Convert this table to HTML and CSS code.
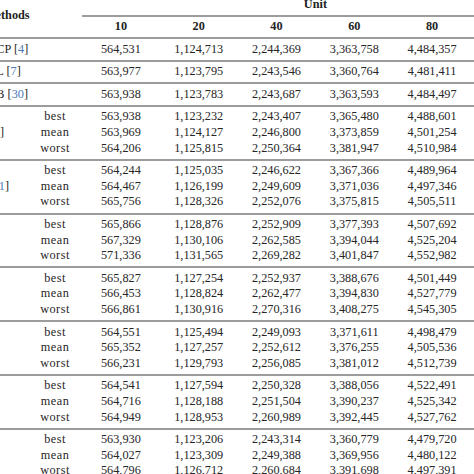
FILE: index.html
```html
<!DOCTYPE html>
<html lang="en">
<head>
<meta charset="utf-8">
<title>Unit commitment results</title>
<link rel="stylesheet" href="styles.css">
</head>
<body>
<div class="frame">
<table class="results">
  <colgroup>
    <col class="c-method">
    <col class="c-label">
    <col class="c-num"><col class="c-num"><col class="c-num"><col class="c-num"><col class="c-num"><col class="c-num">
  </colgroup>
  <thead>
    <tr>
      <th class="methods" rowspan="2">Methods</th>
      <th class="blank" rowspan="2"></th>
      <th class="unit" colspan="6">Unit</th>
    </tr>
    <tr>
      <th>10</th><th>20</th><th>40</th><th>60</th><th>80</th><th class="hidden-col">100</th>
    </tr>
  </thead>
  <tbody>
    <tr>
      <td class="method">MILP-CP [<span class="ref">4</span>]</td><td class="label"></td>
      <td>564,531</td><td>1,124,713</td><td>2,244,369</td><td>3,363,758</td><td>4,484,357</td><td></td>
    </tr>
    <tr>
      <td class="method">MILP-L [<span class="ref">7</span>]</td><td class="label"></td>
      <td>563,977</td><td>1,123,795</td><td>2,243,546</td><td>3,360,764</td><td>4,481,411</td><td></td>
    </tr>
    <tr>
      <td class="method">MILP-B [<span class="ref">30</span>]</td><td class="label"></td>
      <td>563,938</td><td>1,123,783</td><td>2,243,687</td><td>3,363,593</td><td>4,484,497</td><td></td>
    </tr>
    <tr class="group">
      <td class="method">CSO [<span class="ref">9</span>]</td>
      <td class="label"><span>best</span><span>mean</span><span>worst</span></td>
      <td><span>563,938</span><span>563,969</span><span>564,206</span></td>
      <td><span>1,123,232</span><span>1,124,127</span><span>1,125,815</span></td>
      <td><span>2,243,407</span><span>2,246,800</span><span>2,250,364</span></td>
      <td><span>3,365,480</span><span>3,373,859</span><span>3,381,947</span></td>
      <td><span>4,488,601</span><span>4,501,254</span><span>4,510,984</span></td>
      <td></td>
    </tr>
    <tr class="group">
      <td class="method">PSO [<span class="ref">21</span>]</td>
      <td class="label"><span>best</span><span>mean</span><span>worst</span></td>
      <td><span>564,244</span><span>564,467</span><span>565,756</span></td>
      <td><span>1,125,035</span><span>1,126,199</span><span>1,128,326</span></td>
      <td><span>2,246,622</span><span>2,249,609</span><span>2,252,076</span></td>
      <td><span>3,367,366</span><span>3,371,036</span><span>3,375,815</span></td>
      <td><span>4,489,964</span><span>4,497,346</span><span>4,505,511</span></td>
      <td></td>
    </tr>
    <tr class="group">
      <td class="method">GA [<span class="ref">5</span>]</td>
      <td class="label"><span>best</span><span>mean</span><span>worst</span></td>
      <td><span>565,866</span><span>567,329</span><span>571,336</span></td>
      <td><span>1,128,876</span><span>1,130,106</span><span>1,131,565</span></td>
      <td><span>2,252,909</span><span>2,262,585</span><span>2,269,282</span></td>
      <td><span>3,377,393</span><span>3,394,044</span><span>3,401,847</span></td>
      <td><span>4,507,692</span><span>4,525,204</span><span>4,552,982</span></td>
      <td></td>
    </tr>
    <tr class="group">
      <td class="method">SA [<span class="ref">8</span>]</td>
      <td class="label"><span>best</span><span>mean</span><span>worst</span></td>
      <td><span>565,827</span><span>566,453</span><span>566,861</span></td>
      <td><span>1,127,254</span><span>1,128,824</span><span>1,130,916</span></td>
      <td><span>2,252,937</span><span>2,262,477</span><span>2,270,316</span></td>
      <td><span>3,388,676</span><span>3,394,830</span><span>3,408,275</span></td>
      <td><span>4,501,449</span><span>4,527,779</span><span>4,545,305</span></td>
      <td></td>
    </tr>
    <tr class="group">
      <td class="method">TS [<span class="ref">2</span>]</td>
      <td class="label"><span>best</span><span>mean</span><span>worst</span></td>
      <td><span>564,551</span><span>565,352</span><span>566,231</span></td>
      <td><span>1,125,494</span><span>1,127,257</span><span>1,129,793</span></td>
      <td><span>2,249,093</span><span>2,252,612</span><span>2,256,085</span></td>
      <td><span>3,371,611</span><span>3,376,255</span><span>3,381,012</span></td>
      <td><span>4,498,479</span><span>4,505,536</span><span>4,512,739</span></td>
      <td></td>
    </tr>
    <tr class="group">
      <td class="method">EA [<span class="ref">3</span>]</td>
      <td class="label"><span>best</span><span>mean</span><span>worst</span></td>
      <td><span>564,541</span><span>564,716</span><span>564,949</span></td>
      <td><span>1,127,594</span><span>1,128,188</span><span>1,128,953</span></td>
      <td><span>2,250,328</span><span>2,251,504</span><span>2,260,989</span></td>
      <td><span>3,388,056</span><span>3,390,237</span><span>3,392,445</span></td>
      <td><span>4,522,491</span><span>4,525,342</span><span>4,527,762</span></td>
      <td></td>
    </tr>
    <tr class="group">
      <td class="method">HS</td>
      <td class="label"><span>best</span><span>mean</span><span>worst</span></td>
      <td><span>563,930</span><span>564,027</span><span>564,796</span></td>
      <td><span>1,123,206</span><span>1,123,309</span><span>1,126,712</span></td>
      <td><span>2,243,314</span><span>2,249,388</span><span>2,260,684</span></td>
      <td><span>3,360,779</span><span>3,369,956</span><span>3,391,698</span></td>
      <td><span>4,479,720</span><span>4,480,122</span><span>4,497,391</span></td>
      <td></td>
    </tr>
  </tbody>
</table>
</div>
</body>
</html>
```
FILE: styles.css
```css
html, body {
  margin: 0;
  padding: 0;
  background: #ffffff;
}

.frame {
  width: 474px;
  height: 474px;
  overflow: hidden;
}

.results {
  margin-left: -37px;
  margin-top: -6px;
  border-collapse: collapse;
  table-layout: fixed;
  width: 585.8px;
  font-family: "Liberation Serif", "Times New Roman", serif;
  font-size: 12.25px;
  color: #262626;
}

.c-method { width: 65px; }
.c-label { width: 54px; }
.c-num { width: 77.8px; }

.results th,
.results td {
  padding: 2.5px 0;
  line-height: 15.6px;
  text-align: center;
  vertical-align: middle;
  border-bottom: 2px solid #9c9c9c;
  white-space: nowrap;
}

.results th {
  font-weight: bold;
  color: #222;
}

.results th.methods {
  text-align: left;
  padding-left: 21px;
}

.results th.hidden-col {
  color: transparent;
}

.results td.method {
  text-align: left;
}

.results td.label {
  letter-spacing: 0.5px;
}

.results td span {
  display: block;
}

.results span.ref {
  display: inline;
  color: #4d7ab8;
}
```
